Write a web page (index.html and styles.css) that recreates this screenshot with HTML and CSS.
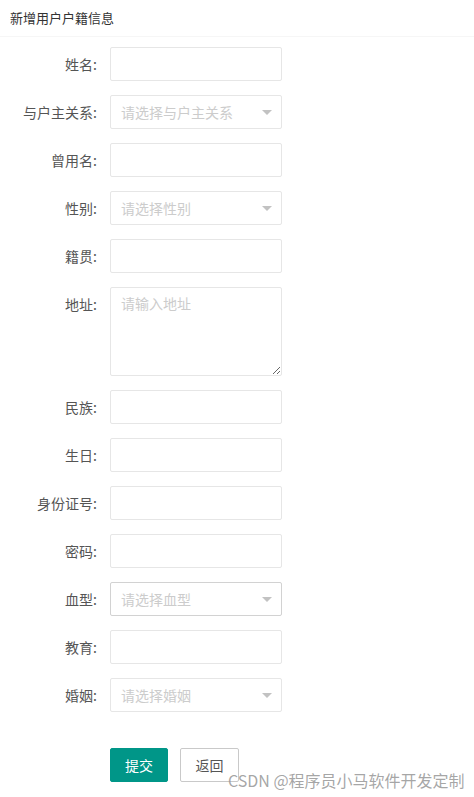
FILE: index.html
```html
<!DOCTYPE html>
<html lang="zh-CN">
<head>
<meta charset="utf-8">
<title>新增用户户籍信息</title>
<link rel="stylesheet" href="styles.css">
</head>
<body>
<div class="card">
  <div class="card-header">新增用户户籍信息</div>
  <form class="form">
    <div class="row"><label class="label">姓名:</label><input class="input" type="text"></div>
    <div class="row"><label class="label">与户主关系:</label><div class="select"><span class="ph">请选择与户主关系</span><i class="arrow"></i></div></div>
    <div class="row"><label class="label">曾用名:</label><input class="input" type="text"></div>
    <div class="row"><label class="label">性别:</label><div class="select"><span class="ph">请选择性别</span><i class="arrow"></i></div></div>
    <div class="row"><label class="label">籍贯:</label><input class="input" type="text"></div>
    <div class="row row-top"><label class="label">地址:</label><textarea class="textarea" placeholder="请输入地址"></textarea></div>
    <div class="row"><label class="label">民族:</label><input class="input" type="text"></div>
    <div class="row"><label class="label">生日:</label><input class="input" type="text"></div>
    <div class="row"><label class="label">身份证号:</label><input class="input" type="text"></div>
    <div class="row"><label class="label">密码:</label><input class="input" type="password"></div>
    <div class="row"><label class="label">血型:</label><div class="select select-hover"><span class="ph">请选择血型</span><i class="arrow"></i></div></div>
    <div class="row"><label class="label">教育:</label><input class="input" type="text"></div>
    <div class="row"><label class="label">婚姻:</label><div class="select"><span class="ph">请选择婚姻</span><i class="arrow"></i></div></div>
    <div class="actions">
      <button type="button" class="btn btn-primary">提交</button>
      <button type="button" class="btn btn-default">返回</button>
    </div>
  </form>
</div>
<div class="watermark">CSDN @程序员小马软件开发定制</div>
</body>
</html>
```
FILE: styles.css
```css
html, body {
  margin: 0;
  padding: 0;
  background: #fff;
}
body {
  font-family: "Noto Sans CJK SC", "Liberation Sans", sans-serif;
  font-size: 14px;
  color: #333;
  width: 474px;
  height: 797px;
  position: relative;
  overflow: hidden;
}
.card-header {
  height: 36px;
  line-height: 36px;
  padding-left: 10px;
  font-size: 13px;
  color: #333;
  border-bottom: 1px solid #f6f6f6;
}
.form {
  padding-top: 10px;
  display: flex;
  flex-direction: column;
  gap: 14px;
}
.row {
  display: flex;
  align-items: center;
}
.row-top {
  align-items: flex-start;
}
.label {
  box-sizing: border-box;
  width: 110px;
  padding-right: 13px;
  text-align: right;
  font-size: 14px;
  color: #555;
  line-height: 34px;
}
.input, .select, .textarea {
  box-sizing: border-box;
  width: 172px;
  height: 34px;
  border: 1px solid #e6e6e6;
  border-radius: 2px;
  background: #fff;
  margin: 0;
  font-family: inherit;
  font-size: 14px;
  outline: none;
}
.input {
  padding: 0 10px;
}
.select {
  position: relative;
  display: flex;
  align-items: center;
  padding: 0 10px;
}
.select-hover {
  border-color: #d2d2d2;
}
.ph {
  color: #cccccc;
}
.arrow {
  position: absolute;
  right: 9px;
  top: 14px;
  width: 0;
  height: 0;
  border-left: 5px solid transparent;
  border-right: 5px solid transparent;
  border-top: 5px solid #c2c2c2;
}
.textarea {
  height: 89px;
  padding: 5px 10px;
  line-height: 20px;
  resize: vertical;
  display: block;
}
.textarea::placeholder {
  color: #cccccc;
}
.actions {
  display: flex;
  gap: 12px;
  padding-left: 110px;
  margin-top: 22px;
}
.btn {
  box-sizing: border-box;
  height: 34px;
  padding: 0;
  border-radius: 2px;
  font-family: inherit;
  font-size: 14px;
  cursor: pointer;
}
.btn-primary {
  width: 58px;
  background: #009688;
  border: 1px solid #009688;
  color: #fff;
}
.btn-default {
  width: 59px;
  background: #fff;
  border: 1px solid #c9c9c9;
  color: #555;
}
.watermark {
  position: absolute;
  left: 228px;
  top: 768px;
  font-size: 16px;
  color: rgba(150, 150, 150, 0.85);
  white-space: nowrap;
  line-height: 24px;
}
```
